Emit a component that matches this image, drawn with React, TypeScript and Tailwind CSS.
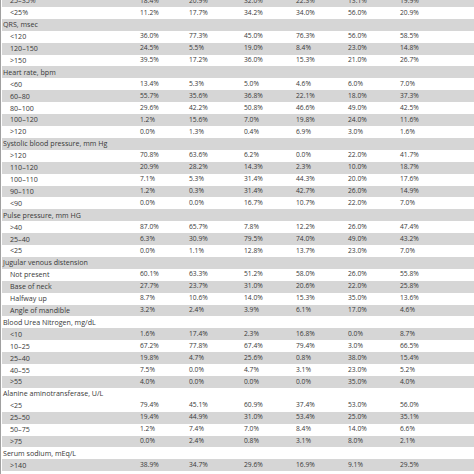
import React from "react";

type Row = { label: string; header?: boolean; gray: boolean; vals?: string[] };

const rows: Row[] = [
  { label: "25–35%", gray: true, vals: ["18.4%", "20.9%", "32.0%", "22.3%", "13.1%", "19.9%"] },
  { label: "<25%", gray: false, vals: ["11.2%", "17.7%", "34.2%", "34.0%", "56.0%", "20.9%"] },
  { label: "QRS, msec", header: true, gray: true },
  { label: "<120", gray: false, vals: ["36.0%", "77.3%", "45.0%", "76.3%", "56.0%", "58.5%"] },
  { label: "120–150", gray: true, vals: ["24.5%", "5.5%", "19.0%", "8.4%", "23.0%", "14.8%"] },
  { label: ">150", gray: false, vals: ["39.5%", "17.2%", "36.0%", "15.3%", "21.0%", "26.7%"] },
  { label: "Heart rate, bpm", header: true, gray: true },
  { label: "<60", gray: false, vals: ["13.4%", "5.3%", "5.0%", "4.6%", "6.0%", "7.0%"] },
  { label: "60–80", gray: true, vals: ["55.7%", "35.6%", "36.8%", "22.1%", "18.0%", "37.3%"] },
  { label: "80–100", gray: false, vals: ["29.6%", "42.2%", "50.8%", "46.6%", "49.0%", "42.5%"] },
  { label: "100–120", gray: true, vals: ["1.2%", "15.6%", "7.0%", "19.8%", "24.0%", "11.6%"] },
  { label: ">120", gray: false, vals: ["0.0%", "1.3%", "0.4%", "6.9%", "3.0%", "1.6%"] },
  { label: "Systolic blood pressure, mm Hg", header: true, gray: true },
  { label: ">120", gray: false, vals: ["70.8%", "63.6%", "6.2%", "0.0%", "22.0%", "41.7%"] },
  { label: "110–120", gray: true, vals: ["20.9%", "28.2%", "14.3%", "2.3%", "10.0%", "18.7%"] },
  { label: "100–110", gray: false, vals: ["7.1%", "5.3%", "31.4%", "44.3%", "20.0%", "17.6%"] },
  { label: "90–110", gray: true, vals: ["1.2%", "0.3%", "31.4%", "42.7%", "26.0%", "14.9%"] },
  { label: "<90", gray: false, vals: ["0.0%", "0.0%", "16.7%", "10.7%", "22.0%", "7.0%"] },
  { label: "Pulse pressure, mm HG", header: true, gray: true },
  { label: ">40", gray: false, vals: ["87.0%", "65.7%", "7.8%", "12.2%", "26.0%", "47.4%"] },
  { label: "25–40", gray: true, vals: ["6.3%", "30.9%", "79.5%", "74.0%", "49.0%", "43.2%"] },
  { label: "<25", gray: false, vals: ["0.0%", "1.1%", "12.8%", "13.7%", "23.0%", "7.0%"] },
  { label: "Jugular venous distension", header: true, gray: true },
  { label: "Not present", gray: false, vals: ["60.1%", "63.3%", "51.2%", "58.0%", "26.0%", "55.8%"] },
  { label: "Base of neck", gray: true, vals: ["27.7%", "23.7%", "31.0%", "20.6%", "22.0%", "25.8%"] },
  { label: "Halfway up", gray: false, vals: ["8.7%", "10.6%", "14.0%", "15.3%", "35.0%", "13.6%"] },
  { label: "Angle of mandible", gray: true, vals: ["3.2%", "2.4%", "3.9%", "6.1%", "17.0%", "4.6%"] },
  { label: "Blood Urea Nitrogen, mg/dL", header: true, gray: false },
  { label: "<10", gray: true, vals: ["1.6%", "17.4%", "2.3%", "16.8%", "0.0%", "8.7%"] },
  { label: "10–25", gray: false, vals: ["67.2%", "77.8%", "67.4%", "79.4%", "3.0%", "66.5%"] },
  { label: "25–40", gray: true, vals: ["19.8%", "4.7%", "25.6%", "0.8%", "38.0%", "15.4%"] },
  { label: "40–55", gray: false, vals: ["7.5%", "0.0%", "4.7%", "3.1%", "23.0%", "5.2%"] },
  { label: ">55", gray: true, vals: ["4.0%", "0.0%", "0.0%", "0.0%", "35.0%", "4.0%"] },
  { label: "Alanine aminotransferase, U/L", header: true, gray: false },
  { label: "<25", gray: false, vals: ["79.4%", "45.1%", "60.9%", "37.4%", "53.0%", "56.0%"] },
  { label: "25–50", gray: true, vals: ["19.4%", "44.9%", "31.0%", "53.4%", "25.0%", "35.1%"] },
  { label: "50–75", gray: false, vals: ["1.2%", "7.4%", "7.0%", "8.4%", "14.0%", "6.6%"] },
  { label: ">75", gray: true, vals: ["0.0%", "2.4%", "0.8%", "3.1%", "8.0%", "2.1%"] },
  { label: "Serum sodium, mEq/L", header: true, gray: false },
  { label: ">140", gray: true, vals: ["38.9%", "34.7%", "29.6%", "16.9%", "9.1%", "29.5%"] },
];

export default function App() {
  return (
    <div
      className="w-[474px] h-[474px] overflow-hidden bg-white text-[#383838] leading-none"
      style={{ fontFamily: '"Open Sans", "DejaVu Sans", sans-serif' }}
    >
      <div className="-mt-[5px] flex flex-col border-l border-[#a0a0a0] pl-[1px]">
        {rows.map((r, i) => (
          <div
            key={i}
            className={`grid grid-cols-[138px_49px_55px_52px_52px_52px_1fr] h-[11.92px] items-center ${
              r.gray ? "bg-[#d6d6d6]" : "bg-white"
            }`}
          >
            <div
              className={`whitespace-nowrap text-[7.1px] ${r.header ? "pl-[1px]" : "pl-[8px]"}`}
            >
              {r.label}
            </div>
            {r.vals ? r.vals.map((v, j) => <div key={j} className="text-[6.7px]">{v}</div>) : null}
          </div>
        ))}
        <div className="h-[3px]" />
      </div>
      <div className="h-[4px] w-[3px] bg-[#222]" />
    </div>
  );
}
